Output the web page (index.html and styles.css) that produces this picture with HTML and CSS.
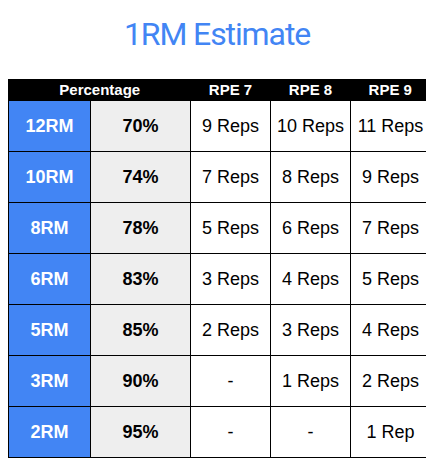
FILE: index.html
```html
<!DOCTYPE html>
<html lang="en">
<head>
    <meta charset="UTF-8">
    <meta name="viewport" content="width=device-width, initial-scale=1.0">
    <title>1RM Estimate</title>
    <link rel="stylesheet" href="styles.css">
</head>
<body>
    <h1 class="title">1RM Estimate</h1>
    <table class="rm-table">
        <colgroup>
            <col class="col-rm">
            <col class="col-pct">
            <col class="col-rpe">
            <col class="col-rpe">
            <col class="col-rpe">
        </colgroup>
        <thead>
            <tr>
                <th colspan="2">Percentage</th>
                <th>RPE 7</th>
                <th>RPE 8</th>
                <th>RPE 9</th>
            </tr>
        </thead>
        <tbody>
            <tr><td class="rm">12RM</td><td class="pct">70%</td><td>9 Reps</td><td>10 Reps</td><td>11 Reps</td></tr>
            <tr><td class="rm">10RM</td><td class="pct">74%</td><td>7 Reps</td><td>8 Reps</td><td>9 Reps</td></tr>
            <tr><td class="rm">8RM</td><td class="pct">78%</td><td>5 Reps</td><td>6 Reps</td><td>7 Reps</td></tr>
            <tr><td class="rm">6RM</td><td class="pct">83%</td><td>3 Reps</td><td>4 Reps</td><td>5 Reps</td></tr>
            <tr><td class="rm">5RM</td><td class="pct">85%</td><td>2 Reps</td><td>3 Reps</td><td>4 Reps</td></tr>
            <tr><td class="rm">3RM</td><td class="pct">90%</td><td>-</td><td>1 Reps</td><td>2 Reps</td></tr>
            <tr><td class="rm">2RM</td><td class="pct">95%</td><td>-</td><td>-</td><td>1 Rep</td></tr>
        </tbody>
    </table>
</body>
</html>
```

FILE: styles.css
```css
body {
    margin: 8px;
    background: #fff;
    font-family: "Liberation Sans", Arial, sans-serif;
}
.title {
    font-family: Roboto, sans-serif;
    font-weight: 400;
    font-size: 32px;
    letter-spacing: -1.1px;
    color: #4285f4;
    text-align: center;
    margin: 6px 0 0;
    height: 65px;
    line-height: 40px;
}
.rm-table {
    border-collapse: collapse;
    width: 422px;
    table-layout: fixed;
    border: 1px solid #000;
}
.col-rm { width: 82px; }
.col-pct { width: 100px; }
.col-rpe { width: 80px; }
.rm-table th {
    background: #000;
    color: #fff;
    font-size: 15px;
    font-weight: bold;
    height: 20px;
    padding: 0;
    line-height: 20px;
    text-align: center;
}
.rm-table td {
    border: 1px solid #000;
    height: 50px;
    padding: 0;
    text-align: center;
    font-size: 18px;
    color: #000;
}
.rm-table td.rm {
    background: #4285f4;
    color: #fff;
    font-weight: bold;
}
.rm-table td.pct {
    background: #eeeeee;
    font-weight: bold;
}
```
